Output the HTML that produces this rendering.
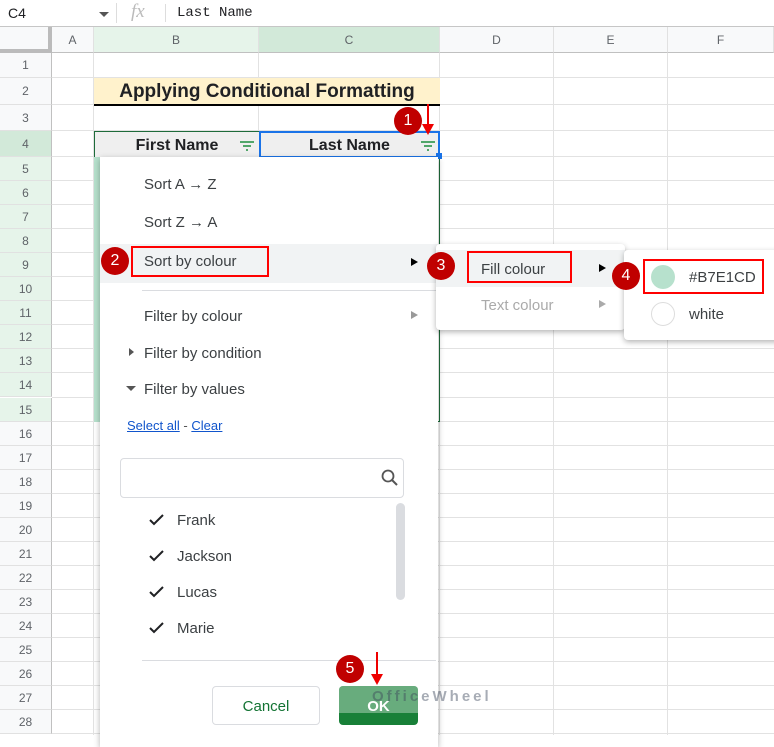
<!DOCTYPE html>
<html><head><style>
*{box-sizing:border-box;margin:0;padding:0}
body{width:774px;height:735px;overflow:hidden;background:#fff;font-family:"Liberation Sans",Arial,sans-serif;position:relative;color:#202124}
.a{position:absolute}
.rh{position:absolute;left:0;width:52px;background:#f8f9fa;border-bottom:1px solid #e1e1e1;border-right:1px solid #c0c0c0;text-align:center;font-size:12px;color:#5f6368}
.ch{position:absolute;top:27px;height:26px;background:#f8f9fa;border-right:1px solid #e1e1e1;border-bottom:1px solid #c0c0c0;text-align:center;font-size:12px;color:#5f6368;line-height:26px}
.vl{position:absolute;top:53px;bottom:0;width:1px;background:#e2e2e2}
.hl{position:absolute;left:52px;right:0;height:1px;background:#e2e2e2}
.mi{position:absolute;left:144px;font-size:15px;color:#3c4043;margin-top:2px}
.badge{position:absolute;width:28px;height:28px;border-radius:50%;background:#c00000;color:#fff;font-size:16px;text-align:center;line-height:28px}
.rb{position:absolute;border:2px solid #ff0000}
</style></head><body>
<div class="a" style="left:0;top:0;width:774px;height:27px;border-bottom:1px solid #c6c6c6;background:#fff"></div>
<div class="a" style="left:8px;top:5px;font-size:14px">C4</div>
<div class="a" style="left:99px;top:12px;border-left:5px solid transparent;border-right:5px solid transparent;border-top:5px solid #555"></div>
<div class="a" style="left:116px;top:3px;width:1px;height:20px;background:#ddd"></div>
<div class="a" style="left:131px;top:1px;font-size:19px;font-style:italic;color:#bbb;font-family:'Liberation Serif',serif">fx</div>
<div class="a" style="left:165px;top:4px;width:1px;height:18px;background:#ddd"></div>
<div class="a" style="left:177px;top:5px;font-size:14px;font-family:'Liberation Mono',monospace">Last Name</div>
<div class="a" style="left:0;top:27px;width:52px;height:26px;background:#f8f9fa;border-right:4px solid #bbb;border-bottom:4px solid #bbb"></div>
<div class="ch" style="left:52px;width:42px">A</div>
<div class="ch" style="left:94px;width:165px;background:#e6f4ea">B</div>
<div class="ch" style="left:259px;width:181px;background:#d2e9d9">C</div>
<div class="ch" style="left:440px;width:114px">D</div>
<div class="ch" style="left:554px;width:114px">E</div>
<div class="ch" style="left:668px;width:106px">F</div>
<div class="vl" style="left:93px"></div><div class="vl" style="left:258px"></div><div class="vl" style="left:439px"></div><div class="vl" style="left:553px"></div><div class="vl" style="left:667px"></div>
<div id="rows"></div>
<script>
var tops=[53,78,105,131];for(var i=5;i<=29;i++)tops.push(157+(i-5)*24.05);
var h='';for(var r=1;r<=28;r++){var t=tops[r-1],b=tops[r];var bg=(r==4)?'#d2e9d9':(r>=5&&r<=15?'#e6f4ea':'#f8f9fa');
h+='<div class="rh" style="top:'+t+'px;height:'+(b-t)+'px;line-height:'+(b-t)+'px;background:'+bg+'">'+r+'</div>';
h+='<div class="hl" style="top:'+(b-1)+'px"></div>';}
document.getElementById('rows').innerHTML=h;
</script>
<div class="a" style="left:94px;top:78px;width:346px;height:28px;background:#fff2cc;border-bottom:2px solid #000;text-align:center;font-weight:bold;font-size:19px;line-height:27px">Applying Conditional Formatting</div>
<div class="a" style="left:94px;top:131px;width:346px;height:291px;border:1px solid #1e6b3a;background:#fff"></div>
<div class="a" style="left:94px;top:157px;width:6px;height:265px;background:#b7e1cd"></div>
<div class="a" style="left:95px;top:132px;width:164px;height:25px;background:#efefef;font-weight:bold;font-size:16px;text-align:center;line-height:27px">First Name</div>
<div class="a" style="left:259px;top:131px;width:181px;height:27px;background:#efefef;border:2px solid #1a73e8;font-weight:bold;font-size:16px;text-align:center;line-height:25px">Last Name</div>
<svg class="a" style="left:239px;top:140px" width="16" height="12"><path d="M1 2h14M4 6h8M7 10h2" stroke="#1e8e3e" stroke-width="1.6"/></svg>
<svg class="a" style="left:420px;top:140px" width="16" height="12"><path d="M1 2h14M4 6h8M7 10h2" stroke="#1e8e3e" stroke-width="1.6"/></svg>
<div class="a" style="left:436px;top:153px;width:6px;height:6px;background:#1a73e8"></div>
<div class="a" style="left:100px;top:157px;width:338px;height:590px;background:#fff;box-shadow:0 2px 6px rgba(0,0,0,.3)"></div>
<div class="mi" style="top:174px">Sort A → Z</div>
<div class="mi" style="top:212px">Sort Z → A</div>
<div class="a" style="left:100px;top:244px;width:338px;height:39px;background:#f1f3f4"></div>
<div class="mi" style="top:251px">Sort by colour</div>
<div class="a" style="left:411px;top:258px;border-top:4px solid transparent;border-bottom:4px solid transparent;border-left:7px solid #000"></div>
<div class="a" style="left:142px;top:290px;width:296px;height:1px;background:#dadce0"></div>
<div class="mi" style="top:306px">Filter by colour</div>
<div class="a" style="left:411px;top:311px;border-top:4px solid transparent;border-bottom:4px solid transparent;border-left:7px solid #999"></div>
<div class="a" style="left:129px;top:348px;border-top:4px solid transparent;border-bottom:4px solid transparent;border-left:5px solid #555"></div>
<div class="mi" style="top:343px">Filter by condition</div>
<div class="a" style="left:126px;top:386px;border-left:5px solid transparent;border-right:5px solid transparent;border-top:5px solid #555"></div>
<div class="mi" style="top:379px">Filter by values</div>
<div class="a" style="left:127px;top:418px;font-size:13px;color:#1155cc"><u>Select all</u> <span style="color:#555">-</span> <u>Clear</u></div>
<div class="a" style="left:120px;top:458px;width:284px;height:40px;border:1px solid #dadce0;border-radius:4px"></div>
<svg class="a" style="left:380px;top:468px" width="20" height="20"><circle cx="8" cy="8" r="5.5" stroke="#555" stroke-width="1.8" fill="none"/><path d="M12 12l5 5" stroke="#555" stroke-width="2"/></svg>
<div class="a" style="left:396px;top:503px;width:9px;height:97px;background:#dadce0;border-radius:5px"></div>
<svg class="a" style="left:148px;top:513px" width="18" height="130"><g stroke="#202124" stroke-width="2" fill="none"><path d="M2 7l4 4 9-9"/><path d="M2 43l4 4 9-9"/><path d="M2 79l4 4 9-9"/><path d="M2 115l4 4 9-9"/></g></svg>
<div class="mi" style="left:177px;top:510px">Frank</div>
<div class="mi" style="left:177px;top:546px">Jackson</div>
<div class="mi" style="left:177px;top:582px">Lucas</div>
<div class="mi" style="left:177px;top:618px">Marie</div>
<div class="a" style="left:142px;top:660px;width:294px;height:1px;background:#dadce0"></div>
<div class="a" style="left:212px;top:686px;width:108px;height:39px;border:1px solid #dadce0;border-radius:4px;text-align:center;line-height:39px;font-size:15px;color:#137333">Cancel</div>
<div class="a" style="left:339px;top:686px;width:79px;height:39px;background:#188038;border-radius:4px;text-align:center;line-height:41px;font-size:15px;font-weight:bold;color:#fff">OK</div>
<div class="a" style="left:339px;top:686px;width:79px;height:27px;background:rgba(255,255,255,.35);border-radius:4px 4px 0 0"></div>
<div class="a" style="left:372px;top:688px;font-size:15px;font-weight:bold;letter-spacing:3px;color:rgba(60,70,90,.45)">OfficeWheel</div>
<div class="a" style="left:436px;top:244px;width:189px;height:86px;background:#fff;border-radius:4px;box-shadow:0 2px 6px rgba(0,0,0,.3)"></div>
<div class="a" style="left:436px;top:250px;width:189px;height:37px;background:#f1f3f4"></div>
<div class="mi" style="left:481px;top:259px">Fill colour</div>
<div class="a" style="left:599px;top:264px;border-top:4px solid transparent;border-bottom:4px solid transparent;border-left:7px solid #000"></div>
<div class="mi" style="left:481px;top:295px;color:#aaa">Text colour</div>
<div class="a" style="left:599px;top:300px;border-top:4px solid transparent;border-bottom:4px solid transparent;border-left:7px solid #aaa"></div>
<div class="a" style="left:624px;top:250px;width:160px;height:90px;background:#fff;border-radius:4px;box-shadow:0 2px 6px rgba(0,0,0,.3)"></div>
<div class="a" style="left:651px;top:265px;width:24px;height:24px;border-radius:50%;background:#b7e1cd"></div>
<div class="mi" style="left:689px;top:267px">#B7E1CD</div>
<div class="a" style="left:651px;top:302px;width:24px;height:24px;border-radius:50%;border:1px solid #ddd"></div>
<div class="mi" style="left:689px;top:304px">white</div>
<div class="rb" style="left:131px;top:246px;width:138px;height:31px"></div>
<div class="rb" style="left:467px;top:251px;width:105px;height:32px"></div>
<div class="rb" style="left:643px;top:259px;width:121px;height:35px"></div>
<div class="badge" style="left:394px;top:107px">1</div>
<svg class="a" style="left:421px;top:104px" width="14" height="32"><path d="M7 0v22" stroke="#e00" stroke-width="2"/><path d="M1 20l6 11 6-11z" fill="#e00"/></svg>
<div class="badge" style="left:101px;top:247px">2</div>
<div class="badge" style="left:427px;top:252px">3</div>
<div class="badge" style="left:612px;top:262px">4</div>
<div class="badge" style="left:336px;top:655px">5</div>
<svg class="a" style="left:370px;top:652px" width="14" height="34"><path d="M7 0v24" stroke="#e00" stroke-width="2"/><path d="M1 22l6 11 6-11z" fill="#e00"/></svg>
</body></html>
